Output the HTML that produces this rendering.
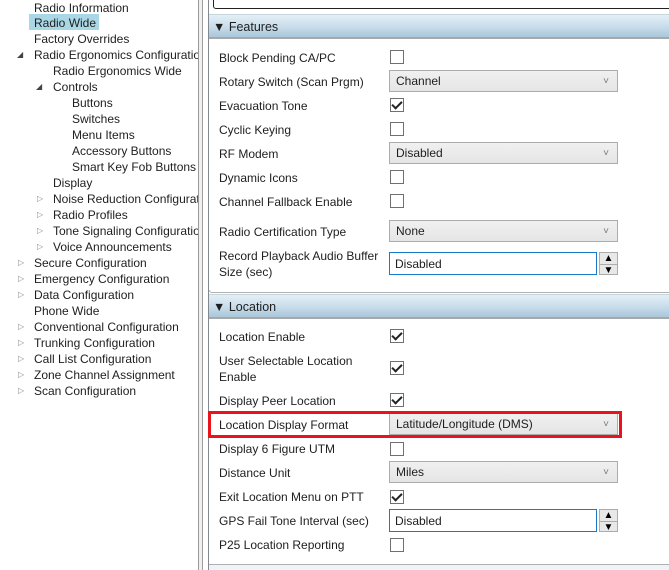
<!DOCTYPE html>
<html><head><meta charset="utf-8"><style>
*{margin:0;padding:0;box-sizing:border-box}
body{width:669px;height:570px;overflow:hidden;background:#fff;font-family:"Liberation Sans",sans-serif;font-size:12px;color:#1e1e1e;position:relative}
.t{position:absolute;white-space:nowrap;line-height:16px;margin-top:1px}
.tree{position:absolute;left:0;top:0;width:198px;height:570px;overflow:hidden}
.ar{position:absolute;font-size:8px;color:#888;line-height:16px;margin-top:1px}
.l{position:absolute;left:219px;white-space:nowrap;line-height:16px;margin-top:1px}
.cb{position:absolute;left:390px;width:14px;height:14px;border:1px solid #707070;background:#fff}
.cb.c::after{content:"";position:absolute;left:3px;top:0px;width:4px;height:8px;border:solid #222;border-width:0 2px 2px 0;transform:rotate(45deg)}
.dd{position:absolute;left:389px;width:229px;height:22px;border:1px solid #acacac;background:linear-gradient(#f0f0f0,#e5e5e5);padding-left:6px;line-height:21px}
.dd::after{content:"˅";position:absolute;right:8px;top:0;font-size:10px;color:#777}
.tb{position:absolute;left:389px;width:208px;height:23px;border:1px solid #1979ca;background:#fff;padding-left:5px;line-height:23px}
.sp{position:absolute;left:599px;width:19px;height:23px;border:1px solid #acacac;background:#e8e8e8}
.sp div{height:11px;font-size:10px;text-align:center;line-height:11px;color:#000}
.sp div+div{border-top:1px solid #acacac}
.hd{position:absolute;left:209px;width:460px;height:25px;background:linear-gradient(#e4eff7,#cadeeb 50%,#a9c7da);border-top:1px solid #c8d4dc;border-bottom:2px solid #a8a8a8;line-height:24px;font-size:12.5px;padding-left:4px}
</style></head><body>
<div class="tree">
<div style="position:absolute;left:29px;top:14px;width:70px;height:16px;background:#aad7e6"></div>
<div class="t" style="left:34px;top:-1px">Radio Information</div>
<div class="t" style="left:34px;top:14px">Radio Wide</div>
<div class="t" style="left:34px;top:30px">Factory Overrides</div>
<div class="ar" style="left:17px;top:46px;color:#444">◢</div>
<div class="t" style="left:34px;top:46px">Radio Ergonomics Configuration</div>
<div class="t" style="left:53px;top:62px">Radio Ergonomics Wide</div>
<div class="ar" style="left:36px;top:78px;color:#444">◢</div>
<div class="t" style="left:53px;top:78px">Controls</div>
<div class="t" style="left:72px;top:94px">Buttons</div>
<div class="t" style="left:72px;top:110px">Switches</div>
<div class="t" style="left:72px;top:126px">Menu Items</div>
<div class="t" style="left:72px;top:142px">Accessory Buttons</div>
<div class="t" style="left:72px;top:158px">Smart Key Fob Buttons</div>
<div class="t" style="left:53px;top:174px">Display</div>
<div class="ar" style="left:37px;top:190px">▷</div><div class="t" style="left:53px;top:190px">Noise Reduction Configuration</div>
<div class="ar" style="left:37px;top:206px">▷</div><div class="t" style="left:53px;top:206px">Radio Profiles</div>
<div class="ar" style="left:37px;top:222px">▷</div><div class="t" style="left:53px;top:222px">Tone Signaling Configuration</div>
<div class="ar" style="left:37px;top:238px">▷</div><div class="t" style="left:53px;top:238px">Voice Announcements</div>
<div class="ar" style="left:18px;top:254px">▷</div><div class="t" style="left:34px;top:254px">Secure Configuration</div>
<div class="ar" style="left:18px;top:270px">▷</div><div class="t" style="left:34px;top:270px">Emergency Configuration</div>
<div class="ar" style="left:18px;top:286px">▷</div><div class="t" style="left:34px;top:286px">Data Configuration</div>
<div class="t" style="left:34px;top:302px">Phone Wide</div>
<div class="ar" style="left:18px;top:318px">▷</div><div class="t" style="left:34px;top:318px">Conventional Configuration</div>
<div class="ar" style="left:18px;top:334px">▷</div><div class="t" style="left:34px;top:334px">Trunking Configuration</div>
<div class="ar" style="left:18px;top:350px">▷</div><div class="t" style="left:34px;top:350px">Call List Configuration</div>
<div class="ar" style="left:18px;top:366px">▷</div><div class="t" style="left:34px;top:366px">Zone Channel Assignment</div>
<div class="ar" style="left:18px;top:382px">▷</div><div class="t" style="left:34px;top:382px">Scan Configuration</div>
</div>
<div style="position:absolute;left:198px;top:0;width:1px;height:570px;background:#999"></div>
<div style="position:absolute;left:199px;top:0;width:3px;height:570px;background:#f0f0f0"></div>
<div style="position:absolute;left:202px;top:0;width:1px;height:570px;background:#a0a0a0"></div>
<div style="position:absolute;left:208px;top:0;width:1px;height:570px;background:#828790"></div>
<div style="position:absolute;left:213px;top:-5px;width:460px;height:14px;border:1px solid #222;border-radius:3px"></div>
<div class="hd" style="top:14px">▼ Features</div>
<div style="position:absolute;left:209px;top:290px;width:460px;height:3px;border-bottom:1px solid #b0b0b0;border-left:1px solid #b0b0b0;border-bottom-left-radius:3px"></div>
<div class="hd" style="top:294px">▼ Location</div>
<div style="position:absolute;left:209px;top:564px;width:460px;height:6px;border-top:1px solid #b0b0b0;background:#eef4f8"></div>

<div class="l" style="top:49px">Block Pending CA/PC</div><div class="cb" style="top:50px"></div>
<div class="l" style="top:73px">Rotary Switch (Scan Prgm)</div><div class="dd" style="top:70px">Channel</div>
<div class="l" style="top:97px">Evacuation Tone</div><div class="cb c" style="top:98px"></div>
<div class="l" style="top:121px">Cyclic Keying</div><div class="cb" style="top:122px"></div>
<div class="l" style="top:145px">RF Modem</div><div class="dd" style="top:142px">Disabled</div>
<div class="l" style="top:169px">Dynamic Icons</div><div class="cb" style="top:170px"></div>
<div class="l" style="top:193px">Channel Fallback Enable</div><div class="cb" style="top:194px"></div>
<div class="l" style="top:223px">Radio Certification Type</div><div class="dd" style="top:220px">None</div>
<div class="l" style="top:247px">Record Playback Audio Buffer<br>Size (sec)</div><div class="tb" style="top:252px">Disabled</div><div class="sp" style="top:252px"><div>▲</div><div>▼</div></div>

<div class="l" style="top:328px">Location Enable</div><div class="cb c" style="top:329px"></div>
<div class="l" style="top:352px">User Selectable Location<br>Enable</div><div class="cb c" style="top:361px"></div>
<div class="l" style="top:392px">Display Peer Location</div><div class="cb c" style="top:393px"></div>
<div class="l" style="top:416px">Location Display Format</div><div class="dd" style="top:413px">Latitude/Longitude (DMS)</div>
<div style="position:absolute;left:208px;top:411px;width:414px;height:27px;border:3px solid #e8141c"></div>
<div class="l" style="top:440px">Display 6 Figure UTM</div><div class="cb" style="top:442px"></div>
<div class="l" style="top:464px">Distance Unit</div><div class="dd" style="top:461px">Miles</div>
<div class="l" style="top:488px">Exit Location Menu on PTT</div><div class="cb c" style="top:490px"></div>
<div class="l" style="top:512px">GPS Fail Tone Interval (sec)</div><div class="tb" style="top:509px">Disabled</div><div class="sp" style="top:509px"><div>▲</div><div>▼</div></div>
<div class="l" style="top:536px">P25 Location Reporting</div><div class="cb" style="top:538px"></div>
</body></html>
